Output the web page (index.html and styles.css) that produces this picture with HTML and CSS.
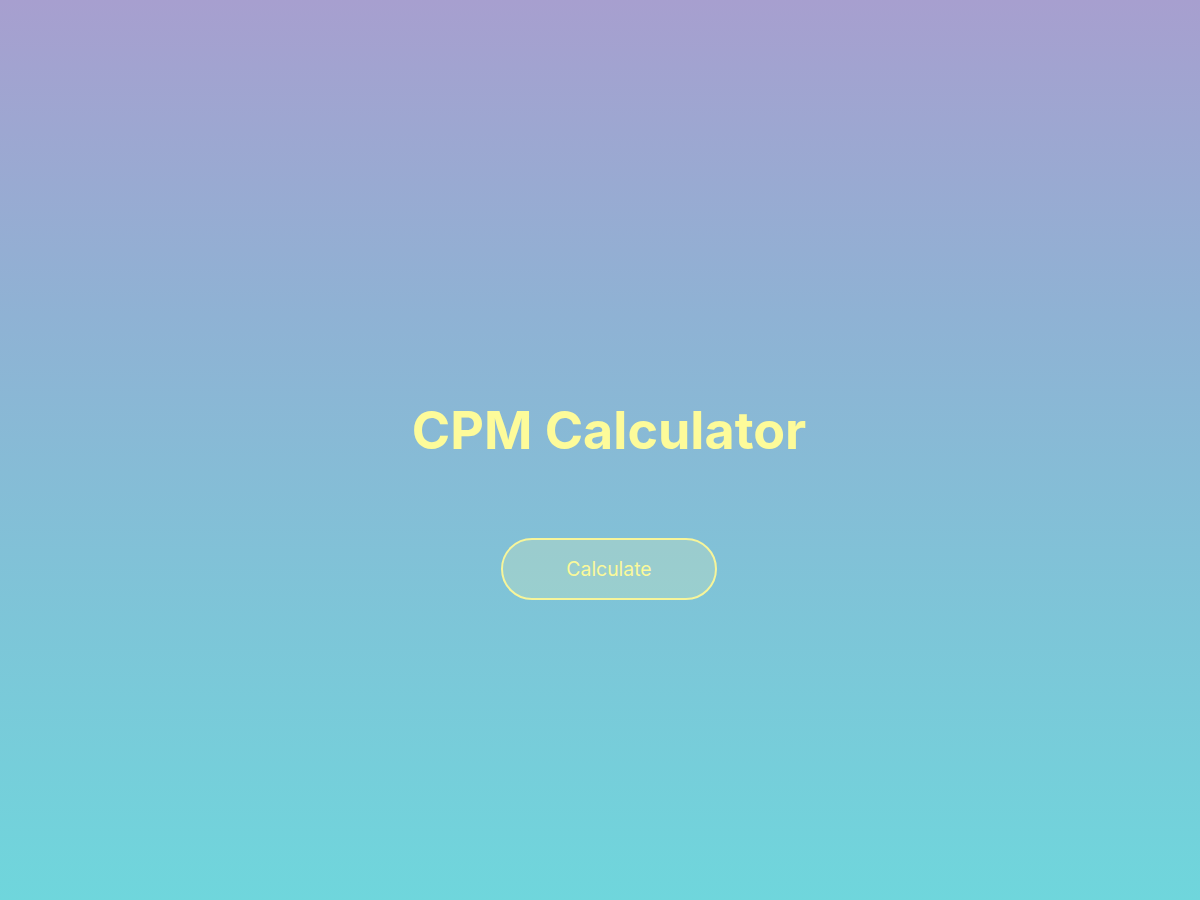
FILE: index.html
```html
<!DOCTYPE html>
<html>
<head>
<meta charset="utf-8">
<link rel="stylesheet" href="styles.css">
</head>
<body>
<main class="page">
  <h1 class="title">CPM Calculator</h1>
  <button class="calc-btn">Calculate</button>
</main>
</body>
</html>
```
FILE: styles.css
```css
html, body {
  margin: 0;
  padding: 0;
  height: 100%;
}
body {
  background: linear-gradient(to bottom, #a79fcf 0%, #8fb2d4 35%, #7dc6d8 70%, #6fd6dc 100%);
  font-family: Inter, "Noto Sans", sans-serif;
}
.page {
  height: 900px;
  display: flex;
  flex-direction: column;
  align-items: center;
  justify-content: flex-start;
  padding-top: 398px;
  padding-left: 18px;
  box-sizing: border-box;
}
.title {
  margin: 0;
  font-size: 52px;
  font-weight: 700;
  line-height: 66px;
  color: #fdfb9a;
}
.calc-btn {
  margin-top: 74px;
  width: 216px;
  height: 62px;
  border-radius: 31px;
  border: 2px solid #f7f59a;
  background: rgba(230, 240, 180, 0.25);
  color: #fbf99a;
  font-family: Inter, "Noto Sans", sans-serif;
  font-size: 19.4px;
  font-weight: 400;
}
```
